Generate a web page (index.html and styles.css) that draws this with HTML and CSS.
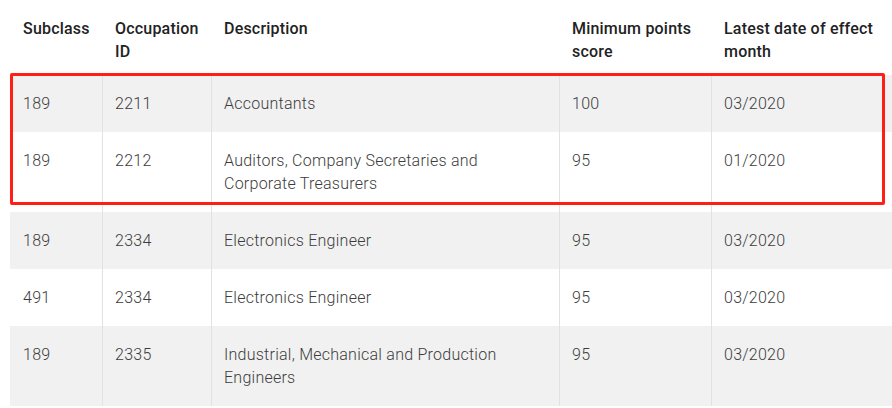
FILE: index.html
```html
<!DOCTYPE html>
<html lang="en">
<head>
<meta charset="utf-8">
<title>Occupation ceilings</title>
<link rel="stylesheet" href="styles.css">
</head>
<body>
<div class="wrap">
  <table class="occ">
    <thead>
      <tr>
        <th class="c1">Subclass</th>
        <th class="c2">Occupation ID</th>
        <th class="c3">Description</th>
        <th class="c4">Minimum points score</th>
        <th class="c5">Latest date of effect month</th>
      </tr>
    </thead>
    <tbody>
      <tr><td>189</td><td>2211</td><td>Accountants</td><td>100</td><td>03/2020</td></tr>
      <tr><td>189</td><td>2212</td><td>Auditors, Company Secretaries and Corporate Treasurers</td><td>95</td><td>01/2020</td></tr>
      <tr><td>189</td><td>2334</td><td>Electronics Engineer</td><td>95</td><td>03/2020</td></tr>
      <tr><td>491</td><td>2334</td><td>Electronics Engineer</td><td>95</td><td>03/2020</td></tr>
      <tr><td>189</td><td>2335</td><td>Industrial, Mechanical and Production Engineers</td><td>95</td><td>03/2020</td></tr>
    </tbody>
  </table>
  <div class="highlight"></div>
</div>
</body>
</html>
```

FILE: styles.css
```css
html, body {
  margin: 0;
  padding: 0;
  background: #ffffff;
  overflow: hidden;
}

body {
  font-family: Roboto, "Liberation Sans", Arial, sans-serif;
  font-size: 16px;
  line-height: 23px;
}

.wrap {
  position: relative;
  padding-left: 10px;
}

.occ {
  width: 882px;
  table-layout: fixed;
  border-collapse: separate;
  border-spacing: 0;
}

.occ th,
.occ td {
  box-sizing: border-box;
  vertical-align: top;
  text-align: left;
  padding: 17px 12px 17px 12px;
  border-left: 1px solid #e2e2e2;
}

.occ th {
  font-weight: 500;
  letter-spacing: 0.2px;
  color: #222222;
  padding-bottom: 12px;
  border-left-color: transparent;
}

.occ th:first-child,
.occ td:first-child {
  border-left: none;
  padding-left: 13px;
}

.occ td {
  font-weight: 300;
  letter-spacing: 0.25px;
  color: #3c3c3c;
}

.occ tbody tr:nth-child(odd) {
  background: #f1f1f1;
}

.c1 { width: 92px; }
.c2 { width: 109px; }
.c3 { width: 348px; }
.c4 { width: 152px; }
.c5 { width: 181px; }

.highlight {
  position: absolute;
  left: 10px;
  top: 73px;
  width: 875px;
  height: 132px;
  box-sizing: border-box;
  border: 3px solid #ff1f17;
  border-radius: 2px;
  pointer-events: none;
}
```
